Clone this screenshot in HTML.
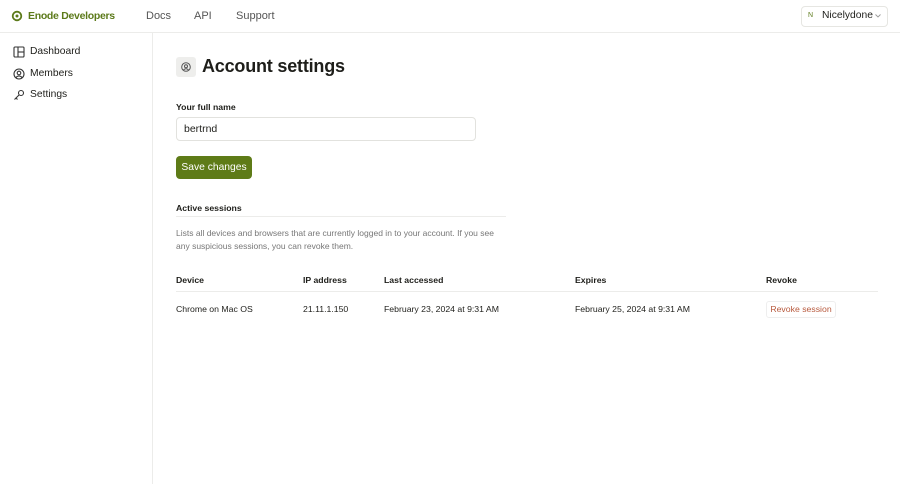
<!DOCTYPE html><html><head><style>
*{box-sizing:border-box;margin:0;padding:0}
body{width:900px;height:484px;background:#fff;font-family:"Liberation Sans",sans-serif;color:#1e1e1a;position:relative;overflow:hidden}
.a{position:absolute;white-space:nowrap}
.top{position:absolute;left:0;top:0;width:900px;height:33px;border-bottom:1px solid #ececea}
.side{position:absolute;left:152px;top:33px;width:1px;height:451px;background:#ececea}
.nav{font-size:11px;color:#555}
.sm{font-size:8.7px}
</style></head><body>
<div class="top"></div><div class="side"></div>
<svg class="a" style="left:11px;top:10px" width="12" height="12"><circle cx="6" cy="6" r="4.3" fill="none" stroke="#5c7a1a" stroke-width="1.8"/><circle cx="6" cy="6" r="1.5" fill="#5c7a1a"/></svg>
<div class="a" style="left:28px;top:10px;font-size:10.5px;color:#5c7a1a;font-weight:bold;letter-spacing:-0.3px">Enode Developers</div>
<div class="a nav" style="left:146px;top:10px">Docs</div>
<div class="a nav" style="left:194px;top:10px">API</div>
<div class="a nav" style="left:236px;top:10px">Support</div>
<div class="a" style="left:801px;top:6px;width:87px;height:21px;border:1px solid #e6e6e2;border-radius:4px"></div>
<div class="a" style="left:808px;top:12px;font-size:7px;color:#5c7a1a">N</div>
<div class="a" style="left:822px;top:10px;font-size:10.3px">Nicelydone</div>
<svg class="a" style="left:875px;top:14px" width="6" height="4" fill="none" stroke="#999" stroke-width="0.9"><path d="M0.5 0.5L3 3L5.5 0.5"/></svg>
<svg class="a" style="left:13px;top:46px" width="12" height="12" fill="none" stroke="#333" stroke-width="1.1"><rect x="1" y="1" width="10" height="10" rx="1"/><line x1="5" y1="1" x2="5" y2="11"/><line x1="5" y1="6" x2="11" y2="6"/></svg>
<div class="a" style="left:30px;top:46px;font-size:10.3px">Dashboard</div>
<svg class="a" style="left:13px;top:68px" width="12" height="12" fill="none" stroke="#333" stroke-width="1.1"><circle cx="6" cy="6" r="5"/><circle cx="6" cy="5" r="1.8"/><path d="M3 9.5c1.5-2 4.5-2 6 0"/></svg>
<div class="a" style="left:30px;top:68px;font-size:10.3px">Members</div>
<svg class="a" style="left:13px;top:89px" width="12" height="12" fill="none" stroke="#333" stroke-width="1.1"><circle cx="8" cy="4" r="2.5"/><path d="M6 6L1.5 10.5M3 9l1.5 1.5"/></svg>
<div class="a" style="left:30px;top:89px;font-size:10.3px">Settings</div>
<div class="a" style="left:176px;top:57px;width:20px;height:20px;background:#eeeeec;border-radius:3px"></div>
<svg class="a" style="left:181px;top:62px" width="10" height="10" fill="none" stroke="#555" stroke-width="1"><circle cx="5" cy="5" r="4.3"/><circle cx="5" cy="4.2" r="1.5"/><path d="M2.5 8c1.3-1.6 3.7-1.6 5 0"/></svg>
<div class="a" style="left:202px;top:56px;font-size:18px;font-weight:bold;letter-spacing:-0.2px">Account settings</div>
<div class="a sm" style="left:176px;top:102px;font-weight:bold">Your full name</div>
<div class="a" style="left:176px;top:117px;width:300px;height:24px;border:1px solid #e2e2de;border-radius:4px"></div>
<div class="a" style="left:184px;top:123px;font-size:10.5px">bertrnd</div>
<div class="a" style="left:176px;top:156px;width:76px;height:23px;background:#5e7b17;border-radius:4px;color:#fff;font-size:10.3px;line-height:23px;text-align:center">Save changes</div>
<div class="a sm" style="left:176px;top:203px;font-weight:bold">Active sessions</div>
<div class="a" style="left:176px;top:216px;width:330px;height:1px;background:#ececea"></div>
<div class="a" style="left:176px;top:227px;color:#777;line-height:12.5px;font-size:8.5px">Lists all devices and browsers that are currently logged in to your account. If you see<br>any suspicious sessions, you can revoke them.</div>
<div class="a sm" style="left:176px;top:275px;font-weight:bold">Device</div>
<div class="a sm" style="left:303px;top:275px;font-weight:bold">IP address</div>
<div class="a sm" style="left:384px;top:275px;font-weight:bold">Last accessed</div>
<div class="a sm" style="left:575px;top:275px;font-weight:bold">Expires</div>
<div class="a sm" style="left:766px;top:275px;font-weight:bold">Revoke</div>
<div class="a" style="left:176px;top:291px;width:702px;height:1px;background:#ececea"></div>
<div class="a sm" style="left:176px;top:304px">Chrome on Mac OS</div>
<div class="a sm" style="left:303px;top:304px">21.11.1.150</div>
<div class="a sm" style="left:384px;top:304px">February 23, 2024 at 9:31 AM</div>
<div class="a sm" style="left:575px;top:304px">February 25, 2024 at 9:31 AM</div>
<div class="a sm" style="left:766px;top:301px;width:70px;height:17px;border:1px solid #eee;border-radius:3px;color:#b85a3e;line-height:15px;text-align:center">Revoke session</div>
</body></html>
